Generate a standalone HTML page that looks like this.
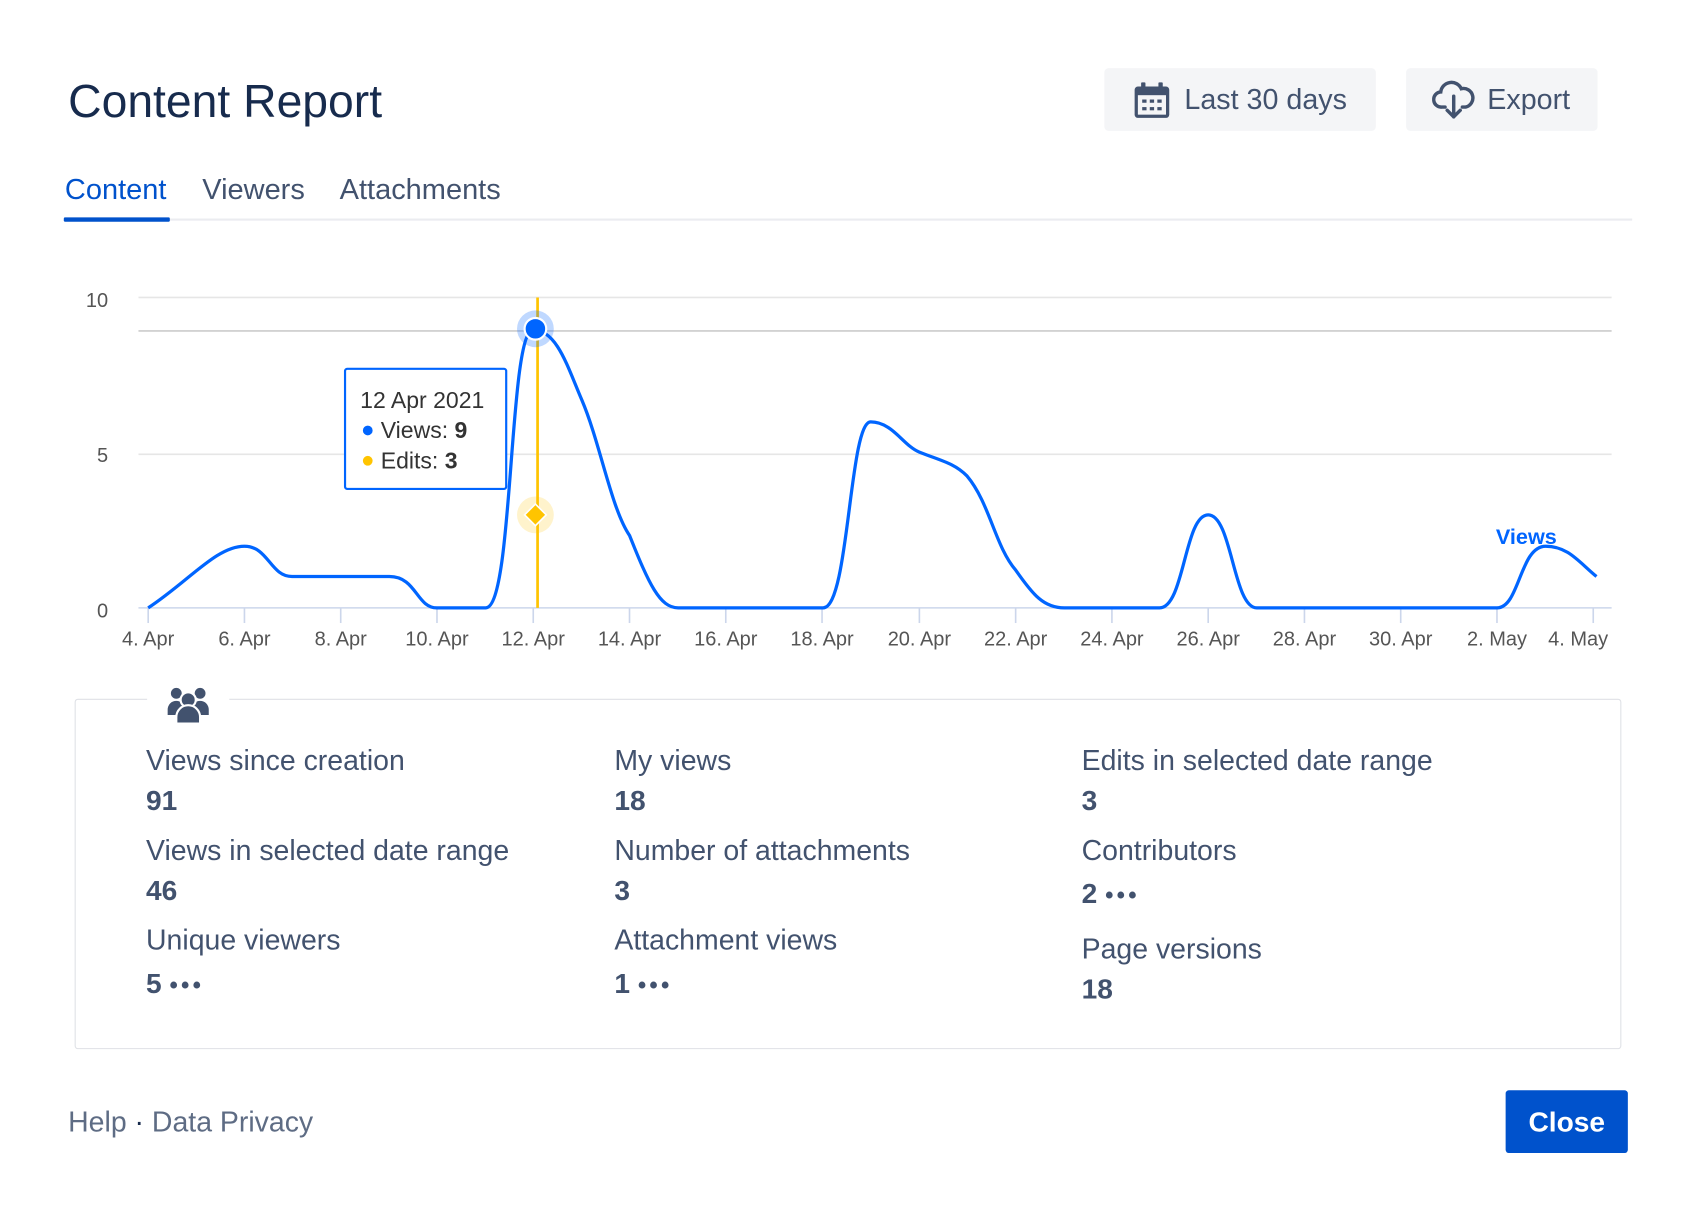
<!DOCTYPE html>
<html><head><meta charset="utf-8"><style>
html,body{margin:0;padding:0;background:#fff;width:1696px;height:1220px;overflow:hidden}
#w{position:absolute;left:0;top:0;width:1568px;height:1128px;transform:scale(1.08163);transform-origin:0 0;font-family:"Liberation Sans",sans-serif;color:#172B4D}
.a{position:absolute;white-space:nowrap}
.btn{position:absolute;background:#F4F5F7;border-radius:4px;color:#42526E;font-size:26px;height:58px;line-height:58px}
.lab{font-size:26.3px;color:#42526E}
.val{font-size:26px;font-weight:bold;color:#42526E}
.d{letter-spacing:3px;font-size:22px}
.ax{font-size:18.5px;fill:#555}
</style></head><body><div id="w">
<div class="a" style="left:63px;top:70px;font-size:42.8px;color:#172B4D">Content Report</div>
<div class="btn" style="left:1021px;top:63px;width:251px">
<svg style="position:absolute;left:27px;top:13px" width="34" height="34" viewBox="0 0 34 34"><rect x="1" y="4" width="32" height="29" rx="3" fill="#42526E"/><rect x="7" y="0" width="4" height="8" rx="1" fill="#42526E"/><rect x="23" y="0" width="4" height="8" rx="1" fill="#42526E"/><rect x="4" y="12" width="26" height="18" fill="#F4F5F7"/><g fill="#42526E"><rect x="8" y="16" width="4" height="3"/><rect x="15" y="16" width="4" height="3"/><rect x="22" y="16" width="4" height="3"/><rect x="8" y="23" width="4" height="3"/><rect x="15" y="23" width="4" height="3"/><rect x="22" y="23" width="4" height="3"/></g></svg>
<span style="position:absolute;left:74px;font-size:26.5px">Last 30 days</span></div>
<div class="btn" style="left:1300px;top:63px;width:177px">
<svg style="position:absolute;left:24px;top:11px" width="40" height="38" viewBox="0 0 40 38"><path d="M12 25H9a7 7 0 0 1-1-14 10 10 0 0 1 19-3 8 8 0 0 1 4 17h-3" fill="none" stroke="#42526E" stroke-width="3.2" stroke-linecap="round"/><path d="M20 15v19M14 28l6 6 6-6" fill="none" stroke="#42526E" stroke-width="3.2" stroke-linecap="round" stroke-linejoin="round"/></svg>
<span style="position:absolute;left:75px;font-size:26.5px">Export</span></div>
<div class="a" style="left:60px;top:160px;font-size:26.8px;color:#0052CC">Content</div>
<div class="a" style="left:187px;top:160px;font-size:26.8px;color:#42526E">Viewers</div>
<div class="a" style="left:314px;top:160px;font-size:26.8px;color:#42526E">Attachments</div>
<div class="a" style="left:59px;top:202px;width:1450px;height:2px;background:#EBECF0"></div>
<div class="a" style="left:59px;top:201px;width:98px;height:4px;background:#0052CC;border-radius:1px"></div>
<svg class="a" style="left:0;top:0" width="1568" height="620" viewBox="0 0 1568 620">
<g stroke="#E6E6E6" stroke-width="1.5"><line x1="128" y1="275" x2="1490" y2="275"/><line x1="128" y1="420" x2="1490" y2="420"/></g>
<line x1="128" y1="306" x2="1490" y2="306" stroke="#ccc" stroke-width="1.5"/>
<line x1="128" y1="562" x2="1490" y2="562" stroke="#ccd6eb" stroke-width="1.5"/>
<g stroke="#ccd6eb" stroke-width="1.5">
<line x1="137" y1="562" x2="137" y2="576"/><line x1="226" y1="562" x2="226" y2="576"/><line x1="315" y1="562" x2="315" y2="576"/><line x1="404" y1="562" x2="404" y2="576"/><line x1="493" y1="562" x2="493" y2="576"/><line x1="582" y1="562" x2="582" y2="576"/><line x1="671" y1="562" x2="671" y2="576"/><line x1="760" y1="562" x2="760" y2="576"/><line x1="850" y1="562" x2="850" y2="576"/><line x1="939" y1="562" x2="939" y2="576"/><line x1="1028" y1="562" x2="1028" y2="576"/><line x1="1117" y1="562" x2="1117" y2="576"/><line x1="1206" y1="562" x2="1206" y2="576"/><line x1="1295" y1="562" x2="1295" y2="576"/><line x1="1384" y1="562" x2="1384" y2="576"/><line x1="1473" y1="562" x2="1473" y2="576"/></g>
<g class="ax" text-anchor="end"><text x="100" y="284">10</text><text x="100" y="427">5</text><text x="100" y="571">0</text></g>
<g class="ax" text-anchor="middle">
<text x="137" y="597">4. Apr</text><text x="226" y="597">6. Apr</text><text x="315" y="597">8. Apr</text><text x="404" y="597">10. Apr</text><text x="493" y="597">12. Apr</text><text x="582" y="597">14. Apr</text><text x="671" y="597">16. Apr</text><text x="760" y="597">18. Apr</text><text x="850" y="597">20. Apr</text><text x="939" y="597">22. Apr</text><text x="1028" y="597">24. Apr</text><text x="1117" y="597">26. Apr</text><text x="1206" y="597">28. Apr</text><text x="1295" y="597">30. Apr</text><text x="1384" y="597">2. May</text><text x="1459" y="597">4. May</text></g>
<line x1="497" y1="275" x2="497" y2="562" stroke="#FFC400" stroke-width="2.5"/>
<path d="M137,562 C175,537 200,505 226,505 C248,505 250,533 270,533 L360,533 C385,533 385,562 404,562 L449,562 C475,562 470,305 493,305 C515,305 525,340 538,370 C555,410 565,470 582,495 C600,540 610,562 627,562 L761,562 C785,562 785,390 805,390 C825,390 835,412 850,418 C870,426 882,428 894,440 C915,465 920,505 939,527 C955,550 965,562 984,562 L1072,562 C1095,562 1095,476 1117,476 C1139,476 1140,562 1162,562 L1384,562 C1405,562 1405,505 1429,505 C1450,505 1460,520 1476,533" fill="none" stroke="#0065FF" stroke-width="3"/>
<circle cx="495" cy="304" r="17" fill="#0065FF" opacity="0.25"/>
<circle cx="495" cy="304" r="10" fill="#0065FF" stroke="#fff" stroke-width="2"/>
<circle cx="495" cy="476" r="17" fill="#FFC400" opacity="0.2"/>
<polygon points="495,466 505,476 495,486 485,476" fill="#FFC400" stroke="#fff" stroke-width="1.5"/>
<text x="1383" y="503" font-size="20" font-weight="bold" fill="#0065FF">Views</text>
<rect x="319" y="341" width="149" height="111" rx="2" fill="#fff" stroke="#0065FF" stroke-width="2"/>
<text x="333" y="377" font-size="21.3" fill="#333">12 Apr 2021</text>
<circle cx="340" cy="398" r="4.5" fill="#0065FF"/><text x="352" y="405" font-size="21.3" fill="#333">Views: <tspan font-weight="bold">9</tspan></text>
<circle cx="340" cy="426" r="4.5" fill="#FFC400"/><text x="352" y="433" font-size="21.3" fill="#333">Edits: <tspan font-weight="bold">3</tspan></text>
</svg>
<div class="a" style="left:69px;top:646px;width:1428px;height:322px;border:1.5px solid #DFE1E6;border-radius:3px"></div>
<div class="a" style="left:136px;top:636px;width:76px;height:20px;background:#fff"></div>
<svg class="a" style="left:154px;top:634px" width="40" height="36" viewBox="0 0 40 36"><g fill="#42526E"><circle cx="9" cy="7" r="5"/><circle cx="31" cy="7" r="5"/><path d="M1 22a8 8 0 0 1 16 0v5H1z"/><path d="M23 22a8 8 0 0 1 16 0v5H23z"/></g><circle cx="20" cy="13" r="7" fill="#42526E" stroke="#fff" stroke-width="2"/><path d="M9 35v-6a11 11 0 0 1 22 0v6z" fill="#42526E" stroke="#fff" stroke-width="2"/></svg>
<div class="a lab" style="left:135px;top:688px">Views since creation</div><div class="a val" style="left:135px;top:725px">91</div>
<div class="a lab" style="left:135px;top:771px">Views in selected date range</div><div class="a val" style="left:135px;top:808px">46</div>
<div class="a lab" style="left:135px;top:854px">Unique viewers</div><div class="a val" style="left:135px;top:894px">5 <span class="d">•••</span></div>
<div class="a lab" style="left:568px;top:688px">My views</div><div class="a val" style="left:568px;top:725px">18</div>
<div class="a lab" style="left:568px;top:771px">Number of attachments</div><div class="a val" style="left:568px;top:808px">3</div>
<div class="a lab" style="left:568px;top:854px">Attachment views</div><div class="a val" style="left:568px;top:894px">1 <span class="d">•••</span></div>
<div class="a lab" style="left:1000px;top:688px">Edits in selected date range</div><div class="a val" style="left:1000px;top:725px">3</div>
<div class="a lab" style="left:1000px;top:771px">Contributors</div><div class="a val" style="left:1000px;top:811px">2 <span class="d">•••</span></div>
<div class="a lab" style="left:1000px;top:862px">Page versions</div><div class="a val" style="left:1000px;top:899px">18</div>
<div class="a" style="left:63px;top:1022px;font-size:26.3px;color:#5E6C84">Help <span style="color:#172B4D">·</span> Data Privacy</div>
<div class="a" style="left:1392px;top:1008px;width:113px;height:58px;background:#0052CC;border-radius:3px;color:#fff;font-size:26px;font-weight:bold;text-align:center;line-height:58px">Close</div>
</div></body></html>
